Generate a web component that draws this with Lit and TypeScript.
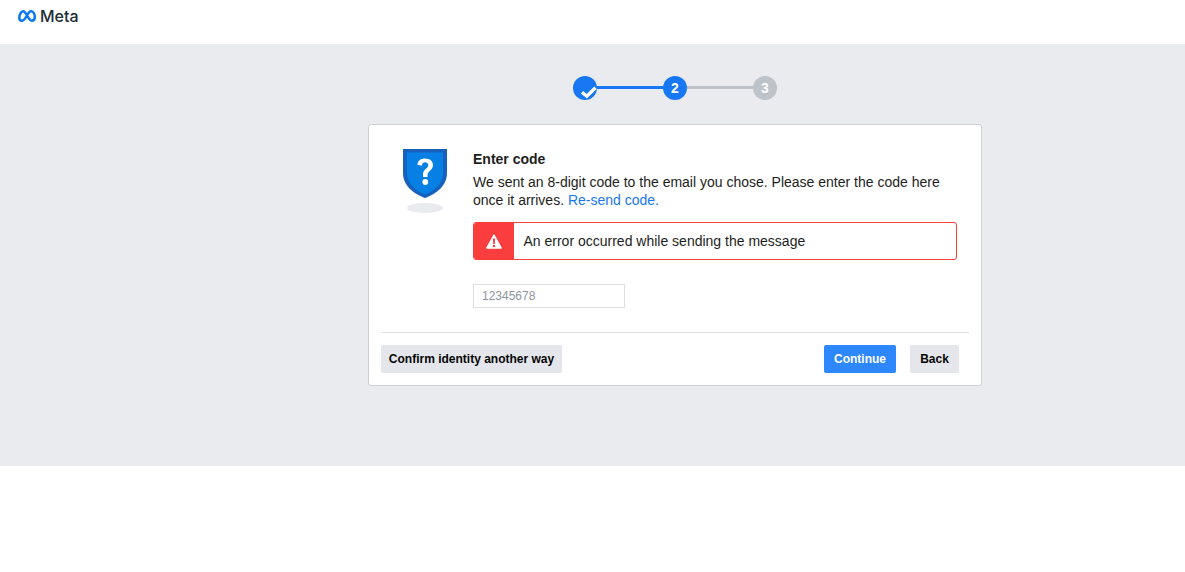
import { LitElement, html, css } from "lit";
import { customElement } from "lit/decorators.js";

@customElement("app-root")
export class AppRoot extends LitElement {
  static styles = css`
    :host { display: block; font-family: "Liberation Sans", Arial, sans-serif; color: #1c1e21; background: #fff; height: 572px; overflow: hidden; }
    .top { height: 44px; padding: 0 0 0 18px; box-sizing: border-box; display: flex; align-items: flex-start; gap: 4px; background: #fff; }
    .top svg { display: block; margin-top: 10px; }
    .word { font-family: Inter, "Liberation Sans", sans-serif; font-size: 16px; line-height: 16px; margin-top: 8px; font-weight: 500; color: #1c2b33; }
    main { height: 422px; background: #e9ebee; box-sizing: border-box; padding: 32px 0 0 368px; }
    .col { width: 614px; }
    .steps { display: flex; align-items: flex-start; justify-content: center; height: 24px; margin-bottom: 24px; }
    .dot { width: 24px; height: 24px; border-radius: 50%; background: #1877f2; color: #fff; font-size: 14px; font-weight: 700; display: flex; align-items: center; justify-content: center; position: relative; }
    .dot.off { background: #bec3c9; }
    .dot svg { position: absolute; left: 6px; top: 7px; }
    .line { width: 66px; height: 3px; margin-top: 10px; background: #1877f2; }
    .line.off { background: #bec3c9; }
    .card { height: 262px; box-sizing: border-box; background: #fff; border: 1px solid #ccd0d5; border-radius: 3px; padding: 24px 12px 12px; display: flex; flex-direction: column; }
    .body { display: flex; height: 183px; }
    .icon { width: 92px; flex: none; padding-left: 22px; box-sizing: border-box; }
    .icon svg { display: block; }
    .content { width: 484px; }
    h2 { margin: 1px 0 0; font-size: 14px; line-height: 18px; font-weight: 700; color: #1c1e21; }
    p { margin: 0; font-size: 14px; line-height: 18px; padding-top: 5px; width: 484px; }
    a { color: #1877f2; text-decoration: none; }
    .alert { margin-top: 13px; height: 38px; box-sizing: border-box; border: 1px solid #fa3e3e; border-radius: 3px; display: flex; align-items: center; font-size: 14px; overflow: hidden; }
    .badge { width: 40px; height: 100%; background: #fa3e3e; display: flex; align-items: center; justify-content: center; margin-right: 9.5px; }
    .input { margin-top: 24px; width: 152px; height: 24px; box-sizing: border-box; border: 1px solid #dddfe2; padding: 0 8px; font: 12px/22px "Liberation Sans", Arial, sans-serif; color: #8d949e; }
    .foot { border-top: 1px solid #dddfe2; padding-top: 12px; display: flex; }
    .btn { height: 28px; box-sizing: border-box; border-radius: 2px; background: #e4e6eb; font-size: 12px; font-weight: 700; line-height: 28px; color: #050505; white-space: nowrap; text-align: center; }
    .confirm { width: 181px; }
    .primary { background: #2d88ff; color: #fff; width: 72px; margin-left: auto; }
    .back { width: 49px; margin-left: 14px; margin-right: 10px; }
  `;

  render() {
    return html`
      <div class="top">
        <svg width="18" height="12" viewBox="0 0 18 12" fill="none">
          <path d="M1.300 8C1.300 4.200 3.200 1.300 5.300 1.300 8 1.300 10.500 10.700 13.700 10.700 15.700 10.700 16.800 9.400 16.800 7.300 16.800 3.800 15 1.300 12.800 1.300 10 1.300 7.600 10.700 4.200 10.700 2.400 10.700 1.300 9.600 1.300 8Z" stroke="#0a78f5" stroke-width="2.500"/>
        </svg>
        <span class="word">Meta</span>
      </div>
      <main>
        <div class="col">
          <div class="steps">
            <div class="dot">
              <svg width="18" height="16" viewBox="0 0 18 16"><path d="M3 9.200L7.800 13.300 16.500 4.800" fill="none" stroke="#fff" stroke-width="3.400"/></svg>
            </div>
            <div class="line"></div>
            <div class="dot">2</div>
            <div class="line off"></div>
            <div class="dot off">3</div>
          </div>
          <div class="card">
            <div class="body">
              <div class="icon">
                <svg width="44" height="64" viewBox="0 0 44 64">
                  <path d="M0 0H44V24C44 37 33 45 22 49 11 45 0 37 0 24Z" fill="#1761bd"/>
                  <path d="M4 3.500H40V24C40 34.500 31 42 22 45.500 13 42 4 34.500 4 24Z" fill="#0780e6"/>
                  <path d="M14.500 16C14.500 11.500 18 9.500 22.200 9.500 26.800 9.500 30 12.300 30 16 30 21.500 24.500 21.500 24.500 26.500V28H20V25.500C20 19.800 25.300 19.500 25.300 16.200 25.300 14.300 24 13.200 22 13.200 20.100 13.200 19 14.500 19 16.500Z" fill="#fff"/>
                  <circle cx="22.300" cy="33" r="2.900" fill="#fff"/>
                  <ellipse cx="22" cy="59" rx="18" ry="5" fill="#e9ebee"/>
                </svg>
              </div>
              <div class="content">
                <h2>Enter code</h2>
                <p>We sent an 8-digit code to the email you chose. Please enter the code here once it arrives. <a>Re-send code.</a></p>
                <div class="alert">
                  <div class="badge">
                    <svg width="16" height="15" viewBox="0 0 16 15">
                      <path d="M8 1L15.200 14H.8Z" fill="#fff" stroke="#fff" stroke-width="1.400" stroke-linejoin="round"/>
                      <path d="M6.900 4.500h2.200l-.3 5.500H7.200Z" fill="#fa3e3e"/>
                      <circle cx="8" cy="12" r="1.200" fill="#fa3e3e"/>
                    </svg>
                  </div>
                  <span>An error occurred while sending the message</span>
                </div>
                <div class="input">12345678</div>
              </div>
            </div>
            <div class="foot">
              <div class="btn confirm">Confirm identity another way</div>
              <div class="btn primary">Continue</div>
              <div class="btn back">Back</div>
            </div>
          </div>
        </div>
      </main>
    `;
  }
}
